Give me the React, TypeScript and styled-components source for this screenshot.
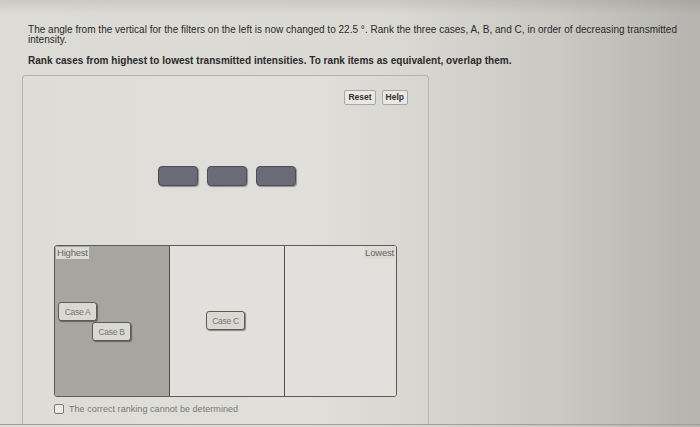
import React from "react";
import styled, { createGlobalStyle } from "styled-components";

const Global = createGlobalStyle`
  html, body { margin: 0; padding: 0; }
  body {
    width: 700px;
    height: 427px;
    overflow: hidden;
    font-family: "Liberation Sans", Arial, sans-serif;
    background: linear-gradient(90deg, #dcdbd6 0%, #dad9d4 55%, #c9c8c3 80%, #b4b3ae 100%);
  }
`;

const Page = styled.div`
  position: relative;
  width: 700px;
  height: 427px;
  display: flex;
  flex-direction: column;
  background: linear-gradient(180deg, rgba(0,0,0,0.08) 0px, rgba(0,0,0,0) 14px);
`;

const Question = styled.p`
  margin: 25px 20px 0 28px;
  font-size: 10px;
  line-height: 10px;
  color: #2a2a2a;
  letter-spacing: 0.02px;
`;

const Instruction = styled.p`
  margin: 10px 0 0 28px;
  font-size: 10px;
  line-height: 12px;
  font-weight: bold;
  color: #2a2a2a;
  letter-spacing: 0.03px;
`;

const Panel = styled.div`
  margin: 8px 0 0 22px;
  width: 407px;
  height: 350px;
  border: 1px solid #b3b2ad;
  border-bottom: none;
  border-radius: 4px 4px 0 0;
  background: linear-gradient(90deg, #dedcd7 0%, #e0dfda 70%, #d6d5d0 100%);
  display: flex;
  flex-direction: column;
  box-sizing: border-box;
`;

const Toolbar = styled.div`
  display: flex;
  justify-content: flex-end;
  gap: 6px;
  padding: 14px 20px 0 0;
`;

const ToolButton = styled.button`
  font-family: "Liberation Sans", Arial, sans-serif;
  font-size: 8.5px;
  font-weight: bold;
  color: #333;
  background: #e9e8e4;
  border: 1px solid #a8a7a2;
  border-radius: 2px;
  height: 15px;
  padding: 0 3px;
  line-height: 13px;
`;

const Tray = styled.div`
  display: flex;
  justify-content: center;
  gap: 9px;
  margin-top: 61px;
  padding-left: 3px;
`;

const EmptyTile = styled.div`
  width: 40px;
  height: 20px;
  box-sizing: border-box;
  background: #6b6b78;
  border: 1px solid #4d4d55;
  border-radius: 4px;
  box-shadow: 1px 1px 1px rgba(0,0,0,0.35);
`;

const Ranking = styled.div`
  margin: 59px 0 0 31px;
  width: 343px;
  height: 152px;
  box-sizing: border-box;
  border: 1px solid #5b5b5b;
  border-radius: 3px;
  display: grid;
  grid-template-columns: 115px 115px 1fr;
  overflow: hidden;
`;

const Column = styled.div<{ $dark?: boolean; $last?: boolean }>`
  position: relative;
  background: ${(p) => (p.$dark ? "#a7a59f" : "#e1e0dc")};
  border-right: ${(p) => (p.$last ? "none" : "1px solid #4f4f4f")};
`;

const Label = styled.span<{ $right?: boolean }>`
  position: absolute;
  top: 1px;
  ${(p) => (p.$right ? "right: 1px;" : "left: 1px;")}
  font-size: 9.5px;
  line-height: 12px;
  color: #666;
  background: #dcdad5;
  padding: 0 1px;
  letter-spacing: -0.2px;
`;

const CaseChip = styled.div`
  position: absolute;
  width: 39px;
  height: 19px;
  box-sizing: border-box;
  display: flex;
  align-items: center;
  justify-content: center;
  font-size: 8.5px;
  color: #777;
  letter-spacing: -0.3px;
  background: #d9d8d3;
  border: 1px solid #5a5a5a;
  border-radius: 3px;
  box-shadow: 1px 1px 1px rgba(0,0,0,0.4);
`;

const CheckRow = styled.label`
  display: flex;
  align-items: center;
  gap: 5px;
  margin: 7px 0 0 31px;
  font-size: 9px;
  color: #777;
  letter-spacing: 0.05px;
`;

const Box = styled.span`
  width: 8px;
  height: 8px;
  border: 1px solid #777;
  border-radius: 2px;
  background: #eceae6;
`;

const BottomLine = styled.div`
  position: absolute;
  left: 0;
  right: 0;
  bottom: 2px;
  height: 1px;
  background: #a09f9a;
`;

export default function App() {
  return (
    <>
      <Global />
      <Page>
        <Question>
          The angle from the vertical for the filters on the left is now changed to 22.5&nbsp;°. Rank the three cases, A, B, and C, in order of decreasing transmitted intensity.
        </Question>
        <Instruction>
          Rank cases from highest to lowest transmitted intensities. To rank items as equivalent, overlap them.
        </Instruction>
        <Panel>
          <Toolbar>
            <ToolButton>Reset</ToolButton>
            <ToolButton>Help</ToolButton>
          </Toolbar>
          <Tray>
            <EmptyTile />
            <EmptyTile />
            <EmptyTile />
          </Tray>
          <Ranking>
            <Column $dark>
              <Label>Highest</Label>
              <CaseChip style={{ left: 3, top: 56 }}>Case A</CaseChip>
              <CaseChip style={{ left: 37, top: 76 }}>Case B</CaseChip>
            </Column>
            <Column>
              <CaseChip style={{ left: 36, top: 65 }}>Case C</CaseChip>
            </Column>
            <Column $last>
              <Label $right>Lowest</Label>
            </Column>
          </Ranking>
          <CheckRow>
            <Box />
            The correct ranking cannot be determined
          </CheckRow>
        </Panel>
        <BottomLine />
      </Page>
    </>
  );
}
